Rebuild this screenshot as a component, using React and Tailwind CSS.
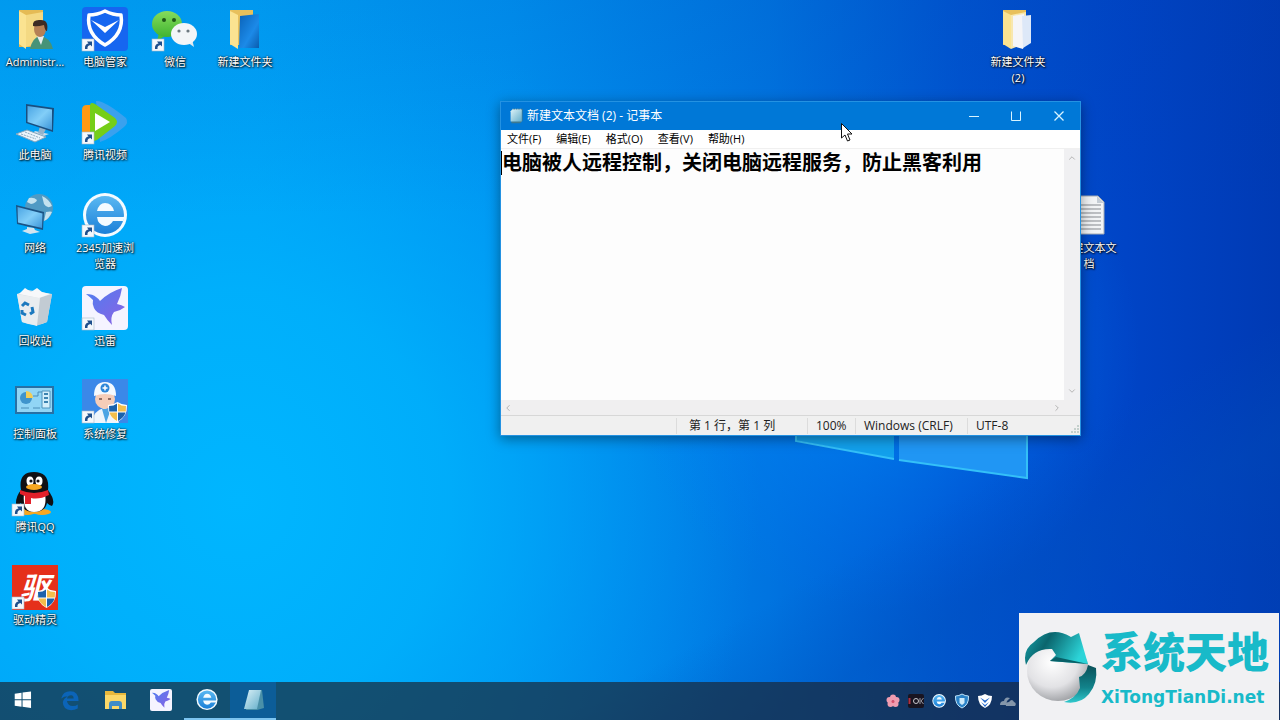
import React, { useState } from 'react';
import { ChevronUp, ChevronDown, ChevronLeft, ChevronRight } from 'lucide-react';

const Wallpaper = () => (
  <svg className="absolute inset-0 h-full w-full" viewBox="0 0 1280 720" preserveAspectRatio="none" aria-hidden="true">
    <defs>
      <linearGradient id="sky" x1="0" y1="0" x2="1" y2="0">
        <stop offset="0" stopColor="#00a6f8" />
        <stop offset="0.2" stopColor="#00a4f8" />
        <stop offset="0.4" stopColor="#0092f0" />
        <stop offset="0.6" stopColor="#0074e0" />
        <stop offset="0.75" stopColor="#0054d0" />
        <stop offset="0.88" stopColor="#0044c6" />
        <stop offset="1" stopColor="#003ab4" />
      </linearGradient>
      <radialGradient id="glow" gradientUnits="userSpaceOnUse" cx="240" cy="500" r="520">
        <stop offset="0" stopColor="#00b6ff" stopOpacity="1" />
        <stop offset="0.4" stopColor="#00b2fc" stopOpacity="0.8" />
        <stop offset="1" stopColor="#00a0f8" stopOpacity="0" />
      </radialGradient>
      <radialGradient id="halo" gradientUnits="userSpaceOnUse" cx="880" cy="350" r="260">
        <stop offset="0" stopColor="#0098ff" stopOpacity="0.6" />
        <stop offset="1" stopColor="#0078ff" stopOpacity="0" />
      </radialGradient>
      <linearGradient id="shade" x1="0" y1="0" x2="0" y2="1">
        <stop offset="0" stopColor="#0040a8" stopOpacity="0.12" />
        <stop offset="0.3" stopColor="#0040a8" stopOpacity="0" />
      </linearGradient>
      <linearGradient id="beam" gradientUnits="userSpaceOnUse" x1="880" y1="540" x2="980" y2="720">
        <stop offset="0" stopColor="#0050b8" stopOpacity="0" />
        <stop offset="0.5" stopColor="#0050b8" stopOpacity="0.35" />
        <stop offset="1" stopColor="#0050b8" stopOpacity="0.2" />
      </linearGradient>
    </defs>
    <rect width="1280" height="720" fill="url(#sky)" />
    <rect width="1280" height="720" fill="url(#glow)" />
    <rect width="1280" height="720" fill="url(#halo)" />
    <rect width="1280" height="720" fill="url(#shade)" />
    <rect width="1280" height="720" fill="url(#beam)" />
    <path d="M796 420 V440 L894 459 V420Z" fill="#12a0ec" />
    <path d="M899 420 V460 L1027 478 V420Z" fill="#2096f4" />
    <path d="M796 420 V441 L894 459 M899 460 L1027 478 V420" fill="none" stroke="#34c0f8" strokeWidth="2" />
  </svg>
);

const Shield = ({ x, y }) => (
  <g transform={`translate(${x} ${y})`}>
    <path d="M9.5 0 Q14 3 19 3 Q19.500 15 9.500 20 Q-0.500 15 0 3 Q5 3 9.500 0Z" fill="#fff" />
    <path d="M9 1.500 V9.500 H1.200 L1 4 Q6 4 9 1.500Z M10 10.500 H17.500 Q16 16 10 19Z" fill="#1b62ac" />
    <path d="M10 1.500 V9.500 H17.800 L18 4 Q13 4 10 1.500Z M9 10.500 H1.500 Q3 16 9 19Z" fill="#f4bf4c" />
  </g>
);

const ShortcutArrow = () => (
  <g>
    <rect x="0" y="32" width="12" height="12" fill="#f4f8fc" stroke="#a8b8c8" strokeWidth="0.6" />
    <path d="M3 42 Q2.500 37 6.500 36.500 L5 34.500 H10 V39.500 L8.500 38 Q5 38.500 5.500 42Z" fill="#1f4f8c" />
  </g>
);

const Folder = () => (
  <g>
    <path d="M8 3 H31 V38 H8Z" fill="#e8c05c" />
    <path d="M8 4 L16 8 V42 L8 37Z" fill="#fbe391" />
  </g>
);

const Bird = () => (
  <path d="M4 8 Q11 8 14 11 Q17 13 18 15 Q27 6 40 2 Q39 10 35 18 Q40 19 43 21 Q38 25 32 26 Q28 31 30 39 Q25 34 22 29 Q14 27 12 22 Q10 18 11 14 Q8 11 4 8Z" fill="url(#birdFill)" />
);

const BrowserE = () => (
  <g>
    <circle cx="23" cy="22" r="22" fill="#f4fbff" />
    <circle cx="23" cy="22" r="19" fill="url(#browserFill)" />
    <path d="M15 18 Q17 10 23 10 Q30 10 32 18Z" fill="#f4fbff" />
    <path d="M15 24 H43 L41 28 H31 Q28 33 23 33 Q16 32 15 24Z" fill="#f4fbff" />
  </g>
);

const PcShield = () => (
  <g>
    <path d="M23 4 Q31 8 39 8 Q42 27 23 38 Q4 27 7 8 Q15 8 23 4Z" fill="none" stroke="#fff" strokeWidth="3.500" strokeLinejoin="round" />
    <path d="M9 13 L23 26 L37 13 L23 20Z" fill="#fff" />
  </g>
);

const pictures = {
  user: (
    <g>
      <path d="M7 3 H31 V40 H7Z" fill="#e5bb55" />
      <path d="M7 4 L14 8 V42 L7 37Z" fill="#fbe391" />
      <path d="M14 8 L31 5 V35 L14 40Z" fill="#f4d983" />
      <path d="M18 42 Q20 31 28 29 Q38 30 41 42Z" fill="#469378" />
      <path d="M25 29 L29 38 L32 29Z" fill="#e8eef0" />
      <ellipse cx="28" cy="22" rx="6" ry="8" fill="#b58056" />
      <path d="M21 19 Q20 12 29 13 Q37 13 35 24 Q33 24 32 18 Q25 20 21 19Z" fill="#3c2b24" />
    </g>
  ),
  manager: (
    <g>
      <rect width="46" height="44" rx="4" fill="#1666f0" />
      <PcShield />
    </g>
  ),
  wechat: (
    <g>
      <path d="M7 26 L5 34 L13 29Z" fill="#49bd38" />
      <ellipse cx="15" cy="17" rx="15" ry="13" fill="url(#wechatFill)" />
      <circle cx="12" cy="13" r="2" fill="#1e5818" />
      <circle cx="22" cy="13" r="2" fill="#1e5818" />
      <path d="M35 35 L42 40 L40 32Z" fill="#e0e8ee" />
      <ellipse cx="32" cy="27" rx="13" ry="11" fill="#f2f5f8" />
      <circle cx="27" cy="24" r="1.600" fill="#6c7880" />
      <circle cx="36" cy="24" r="1.600" fill="#6c7880" />
    </g>
  ),
  folder: (
    <g>
      <Folder />
      <path d="M18 9 L37 7 V41 H17Z" fill="url(#folderInside)" />
    </g>
  ),
  papers: (
    <g>
      <Folder />
      <path d="M16 8 L31 5 V36 L16 42Z" fill="#f8e7ae" />
      <path d="M18 9 L29 7 V38 L28 42 L18 39Z" fill="#f5f5f8" />
      <path d="M27 9 L36 8 V36 L28 41Z" fill="#dde8f8" />
    </g>
  ),
  computer: (
    <g>
      <path d="M23 31 L37 34 L29 37 L20 34Z" fill="#cadbe8" />
      <path d="M28 26 L34 29 L31 35 L26 33Z" fill="#94b3cb" />
      <path d="M14 4 L42 8 L41 32 L14 23Z" fill="#194f80" />
      <path d="M15.500 6 L40 9.500 V30 L15.500 22Z" fill="url(#screenFill)" />
      <path d="M4 34 L15 30 L34 37 L23 42Z" fill="#eaf4fb" stroke="#83a5bd" />
      <path d="M9 34 L24 39 M13 32 L28 38" stroke="#8eabc0" strokeDasharray="2 1" />
    </g>
  ),
  video: (
    <g>
      <path d="M14 1 Q22 0 44 18 Q47 23 42 27 Q28 39 18 42Z" fill="#3aa1ee" />
      <path d="M0 10 Q0 5 5 5 H10 V38 H0Z" fill="#ff9914" />
      <path d="M8 6 Q8 1 13 4 L33 18 Q37 22 33 26 L15 40 Q8 43 8 38Z" fill="#75ce18" />
      <path d="M13 13 L28 22 L13 31Z" fill="#fff" />
    </g>
  ),
  network: (
    <g>
      <circle cx="27" cy="15" r="14" fill="#4f9ac4" />
      <path d="M17 5 Q22 4 25 7 Q24 10 19 11 L15 9Z M30 3 Q37 6 40 13 Q35 16 32 11Z M34 19 Q39 18 40 19 Q37 26 32 28Z" fill="#c3e2ef" />
      <path d="M4 12 L32 19 L31 37 L5 31Z" fill="#1b5384" />
      <path d="M5.500 14 L30.500 20.500 L30 35 L6 29.500Z" fill="url(#screenFill)" />
      <path d="M15 34 L22 35 L23 37 L28 39 L18 41 L10 38 L15 36Z" fill="#d2e4ef" />
    </g>
  ),
  browser: <BrowserE />,
  bin: (
    <g>
      <path d="M5 8 L16 4 L40 8 L35 36 Q24 42 10 36Z" fill="#d9e0e5" />
      <path d="M5 8 L27 12 L40 8 L35 36 L24 40Z" fill="#c2cbd3" />
      <path d="M5 8 L28 12 L25 40 L10 36Z" fill="#e9edf0" />
      <path d="M7 8 L13 2 L19 6 L25 2 L30 6 L38 8 L27 12Z" fill="#f7f8fa" />
      <path d="M10 20 L13 17 L17 19 M20 21 L21 26 L18 28 M14 29 L10 27 L10 24" fill="none" stroke="#1c79be" strokeWidth="3" />
    </g>
  ),
  thunder: (
    <g>
      <rect width="46" height="44" rx="4" fill="#f5f4ff" />
      <Bird />
    </g>
  ),
  panel: (
    <g>
      <rect x="3" y="7" width="39" height="28" fill="#2870a4" />
      <rect x="5" y="9" width="35" height="24" fill="#91d5f5" />
      <circle cx="14" cy="19" r="6" fill="#3f94cc" />
      <path d="M14 19 V12 A7 7 0 0 1 21 19Z" fill="#f3cd55" />
      <path d="M21 17 H26 V13 H30 M21 29 H28 M9 29 H17" fill="none" stroke="#4a8eb8" />
      <path d="M30 12 H38 V29 H30Z" fill="#d3effb" stroke="#4e94bd" />
      <path d="M32 15 H36 M32 19 H36 M32 23 H36" stroke="#3c83b0" strokeWidth="2" />
    </g>
  ),
  repair: (
    <g>
      <rect width="46" height="44" fill="#3b88e8" />
      <path d="M9 44 Q12 31 22 29 Q34 31 37 44Z" fill="#eef5fc" />
      <path d="M20 30 L24 44 L29 30Z" fill="#4ca4e4" />
      <ellipse cx="23" cy="20" rx="10" ry="10" fill="#f6cdb8" />
      <path d="M12 17 Q12 3 23 3 Q34 3 34 17 Q23 13 12 17Z" fill="#f5faff" />
      <circle cx="23" cy="9" r="4.500" fill="#2e87d8" />
      <path d="M23 6.500 V11.500 M20.500 9 H25.500" stroke="#fff" strokeWidth="1.500" />
      <path d="M17 20 H20 M26 20 H29" stroke="#745048" strokeWidth="1.500" />
      <Shield x={26} y={23} />
    </g>
  ),
  qq: (
    <g>
      <ellipse cx="15" cy="40" rx="9" ry="3" fill="#f7a822" />
      <ellipse cx="30" cy="40" rx="9" ry="3" fill="#f7a822" />
      <path d="M9 18 Q6 0 22 0 Q38 0 36 18 Q44 29 40 34 Q38 34 35 31 Q33 40 22 40 Q11 40 9 31 Q4 35 4 31 Q4 24 9 18Z" fill="#101014" />
      <path d="M12 22 H33 Q36 40 22 40 Q10 40 12 22Z" fill="#fff" />
      <ellipse cx="18" cy="9" rx="3.500" ry="4.500" fill="#fff" />
      <ellipse cx="27" cy="9" rx="3.500" ry="4.500" fill="#fff" />
      <circle cx="19" cy="9" r="1.600" fill="#101014" />
      <circle cx="26" cy="9" r="1.600" fill="#101014" />
      <ellipse cx="22" cy="15" rx="8" ry="3" fill="#f7a822" />
      <path d="M8 18 Q22 24 36 18 L37 23 Q27 28 19 26 V32 H13 V24 L8 22Z" fill="#e2202a" />
    </g>
  ),
  driver: (
    <g>
      <rect width="46" height="45" fill="#e5301a" />
      <text x="8" y="34" fontSize="30" fontWeight="700" fontStyle="italic" fill="#fff">驱</text>
      <Shield x={25} y={23} />
    </g>
  ),
  document: (
    <g>
      <path d="M8 3 H32 L38 9 V41 H8Z" fill="#f2f4f6" stroke="#a6acb2" />
      <path d="M31 3 V10 H38Z" fill="#c4ccd4" />
      <path d="M11 12 H35 M11 16 H35 M11 20 H35 M11 24 H35 M11 28 H35 M11 32 H35 M11 36 H35" stroke="#85898f" />
    </g>
  ),
};

// Gradients shared by the desktop and taskbar drawings
const SharedDefs = () => (
  <svg className="absolute h-0 w-0" aria-hidden="true">
    <defs>
      <linearGradient id="birdFill" x1="0" y1="0" x2="1" y2="1">
        <stop offset="0" stopColor="#4e7ef0" />
        <stop offset="1" stopColor="#8b62e4" />
      </linearGradient>
      <linearGradient id="browserFill" x1="0" y1="0" x2="0" y2="1">
        <stop offset="0" stopColor="#5ab8f2" />
        <stop offset="1" stopColor="#1b80d8" />
      </linearGradient>
      <linearGradient id="wechatFill" x1="0" y1="0" x2="0" y2="1">
        <stop offset="0" stopColor="#86dc5c" />
        <stop offset="1" stopColor="#40b431" />
      </linearGradient>
      <linearGradient id="folderInside" x1="0" y1="0" x2="1" y2="1">
        <stop offset="0" stopColor="#0a62b8" />
        <stop offset="0.6" stopColor="#1c8ae8" />
        <stop offset="1" stopColor="#0a5cae" />
      </linearGradient>
      <linearGradient id="screenFill" x1="0" y1="0" x2="1" y2="1">
        <stop offset="0" stopColor="#4aa5e4" />
        <stop offset="0.5" stopColor="#82cef8" />
        <stop offset="1" stopColor="#3a94d8" />
      </linearGradient>
      <linearGradient id="noteFill" x1="0" y1="0" x2="1" y2="1">
        <stop offset="0" stopColor="#dcf2f8" />
        <stop offset="1" stopColor="#64aeca" />
      </linearGradient>
    </defs>
  </svg>
);

const columns = [
  [
    { label: 'Administr...', picture: 'user' },
    { label: '此电脑', picture: 'computer' },
    { label: '网络', picture: 'network' },
    { label: '回收站', picture: 'bin' },
    { label: '控制面板', picture: 'panel' },
    { label: '腾讯QQ', picture: 'qq', shortcut: true },
    { label: '驱动精灵', picture: 'driver', shortcut: true },
  ],
  [
    { label: '电脑管家', picture: 'manager', shortcut: true },
    { label: '腾讯视频', picture: 'video', shortcut: true },
    { label: '2345加速浏览器', picture: 'browser', shortcut: true },
    { label: '迅雷', picture: 'thunder', shortcut: true },
    { label: '系统修复', picture: 'repair', shortcut: true },
  ],
  [{ label: '微信', picture: 'wechat', shortcut: true }],
  [{ label: '新建文件夹', picture: 'folder' }],
];

const DesktopIcon = ({ label, picture, shortcut }) => (
  <button type="button" className="flex h-[93px] w-[70px] flex-col items-center pt-[7px]">
    <svg viewBox="0 0 46 46" className="h-[46px] w-[46px] shrink-0 overflow-visible" aria-hidden="true">
      {pictures[picture]}
      {shortcut && <ShortcutArrow />}
    </svg>
    <span className="mt-px w-16 text-center text-[11px] leading-4 text-white [text-shadow:1px_1px_2px_#000,0_0_2px_#000]">
      {label}
    </span>
  </button>
);

const menus = ['文件(F)', '编辑(E)', '格式(O)', '查看(V)', '帮助(H)'];

const NotepadIcon = ({ className }) => (
  <svg viewBox="0 0 20 20" className={className} aria-hidden="true">
    <path d="M5 1 H17 V16 L14 19 H3 V3Z" fill="#3c7890" />
    <path d="M4 2 H16 V17 H2 V4Z" fill="url(#noteFill)" />
    <path d="M5 2 V1 M8 2 V1 M11 2 V1 M14 2 V1" stroke="#eef8fc" />
  </svg>
);

const Notepad = () => {
  const [text, setText] = useState('电脑被人远程控制，关闭电脑远程服务，防止黑客利用');

  return (
    <section className="absolute left-[500px] top-[101px] flex h-[335px] w-[581px] flex-col border border-[#2492e2] bg-white shadow-[0_3px_12px_rgba(0,0,0,0.4)]">
      <header className="flex h-7 shrink-0 items-center bg-[#0078d7] pl-2 text-white">
        <NotepadIcon className="h-4 w-4" />
        <h1 className="ml-[2px] text-xs">新建文本文档 (2) - 记事本</h1>
        <div className="ml-auto flex h-full">
          <button type="button" aria-label="最小化" className="grid w-[42px] place-items-center">
            <svg viewBox="0 0 10 10" className="h-[10px] w-[10px]"><path d="M0 5.500 H10" stroke="#d8f4ff" /></svg>
          </button>
          <button type="button" aria-label="最大化" className="grid w-[42px] place-items-center">
            <svg viewBox="0 0 10 10" className="h-[10px] w-[10px]"><path d="M0.500 0.500 V9.500 H9.500 V0.500" fill="none" stroke="#d8f4ff" /></svg>
          </button>
          <button type="button" aria-label="关闭" className="grid w-[43px] place-items-center">
            <svg viewBox="0 0 10 10" className="h-[10px] w-[10px]"><path d="M0.500 0.500 L9.500 9.500 M9.500 0.500 L0.500 9.500" stroke="#d8f4ff" strokeWidth="1.300" /></svg>
          </button>
        </div>
      </header>
      <nav className="flex h-[19px] shrink-0 items-center gap-[15px] border-b border-[#f0f0f0] bg-white px-[6px] text-[11px] text-black">
        {menus.map((menu) => (
          <button key={menu} type="button">{menu}</button>
        ))}
      </nav>
      <div className="flex min-h-0 flex-1">
        <div className="flex flex-1 bg-[#fdfdfd] pt-[2px]">
          <span className="h-6 w-px bg-black" />
          <textarea
            aria-label="文本编辑器"
            value={text}
            onChange={(e) => setText(e.target.value)}
            spellCheck={false}
            className="h-full flex-1 resize-none overflow-hidden bg-transparent text-xl leading-6 font-bold text-black outline-none"
          />
        </div>
        <div className="flex w-4 flex-col items-center justify-between bg-[#f0f0f2] py-1 text-[#a8a8a8]">
          <ChevronUp size={10} />
          <ChevronDown size={10} />
        </div>
      </div>
      <div className="flex h-[15px] shrink-0 items-center justify-between bg-[#f0eff0] pr-[18px] pl-[2px] text-[#a8a8a8]">
        <ChevronLeft size={10} />
        <ChevronRight size={10} />
      </div>
      <footer className="flex h-5 shrink-0 items-center justify-end border-t border-[#d7d7d7] bg-[#f0f0f0] text-xs leading-4 text-[#222]">
        <span className="w-[131px] border-l border-[#dcdcdc] pl-3">第 1 行，第 1 列</span>
        <span className="w-12 border-l border-[#dcdcdc] pl-2">100%</span>
        <span className="w-[112px] border-l border-[#dcdcdc] pl-2">Windows (CRLF)</span>
        <span className="flex w-[113px] items-end justify-between border-l border-[#dcdcdc] pl-2">
          UTF-8
          <svg viewBox="0 0 10 10" className="h-[10px] w-[10px]" aria-hidden="true">
            <path d="M7 1h2v2h-2z M7 4h2v2h-2z M4 4h2v2h-2z M7 7h2v2h-2z M4 7h2v2h-2z M1 7h2v2h-2z" fill="#c4d0cc" />
          </svg>
        </span>
      </footer>
    </section>
  );
};

const taskbarApps = [
  {
    name: '开始',
    art: <path d="M4 7 L14 5.500 V15 H4Z M15.500 5.300 L28 3.500 V15 H15.500Z M4 16.500 H14 V26 L4 24.500Z M15.500 16.500 H28 V28 L15.500 26.200Z" fill="#fff" transform="translate(5 5) scale(0.68)" />,
  },
  {
    name: 'Edge',
    art: <path d="M5 14 Q7 5 16 5 Q26 5 26 17 H12 Q13 23 19 23 Q23 23 25 21 V26 Q21 28 17 28 Q7 27 7 18 Q8 13 14 11 Q8 11 5 14Z M12 14 H20 Q20 10 17 10 Q13 10 12 14Z" fill="#0b64b8" fillRule="evenodd" transform="translate(4 3) scale(0.83)" />,
  },
  {
    name: '文件资源管理器',
    art: (
      <g>
        <path d="M6 7 H14 L16 9 H27 V25 H6Z" fill="#e8b83c" />
        <path d="M6 11 H27 V25 H6Z" fill="#fbd868" />
        <path d="M10 25 V20 Q10 17 13 17 H20 Q23 17 23 20 V25 H20 V22 H13 V25Z" fill="#3f8cc8" />
      </g>
    ),
  },
  {
    name: '迅雷',
    art: (
      <g>
        <rect x="5" y="5" width="22" height="22" rx="2" fill="#f5f4ff" />
        <g transform="translate(5 5) scale(0.48)"><Bird /></g>
      </g>
    ),
  },
  { name: '2345加速浏览器', open: true, art: <g transform="translate(5 5) scale(0.48)"><BrowserE /></g> },
  {
    name: '记事本',
    open: true,
    active: true,
    art: (
      <g>
        <path d="M13 6 H25 L27 24 L20 26 H9Z" fill="#4a90a8" />
        <path d="M12 6 H24 L20 25 H7Z" fill="url(#noteFill)" />
      </g>
    ),
  },
];

const trayIcons = [
  {
    name: '花',
    art: (
      <g fill="#f09cb0">
        <circle cx="8" cy="4.500" r="3" />
        <circle cx="4.500" cy="7" r="3" />
        <circle cx="11.500" cy="7" r="3" />
        <circle cx="5.500" cy="11" r="3" />
        <circle cx="10.500" cy="11" r="3" />
        <circle cx="8" cy="8.500" r="1.500" fill="#d8506c" />
      </g>
    ),
  },
  {
    name: '录屏',
    art: (
      <g>
        <rect x="0" y="1" width="16" height="14" rx="2" fill="#181420" />
        <path d="M1.500 5 V11" stroke="#b03040" strokeWidth="2" />
        <circle cx="8" cy="8" r="2.500" fill="none" stroke="#c8c8cc" />
        <path d="M12 5 V11 M15.500 5 L13 8 L15.500 11" fill="none" stroke="#9c9ca4" />
      </g>
    ),
  },
  { name: '浏览器', art: <g transform="translate(1 1) scale(0.31)"><BrowserE /></g> },
  {
    name: '安全防护',
    art: (
      <g>
        <path d="M8 1 Q11 3 14.500 3 Q15 12 8 15 Q1 12 1.500 3 Q5 3 8 1Z" fill="#2a82c8" stroke="#bfe4fa" />
        <path d="M5.500 5 H10.500 V10 L8 12 L5.500 10Z" fill="#cdeafa" />
      </g>
    ),
  },
  {
    name: '电脑管家',
    art: (
      <g>
        <path d="M8 1 Q11 3 15 3 Q15 12 8 15 Q1 12 1 3 Q5 3 8 1Z" fill="#fff" />
        <path d="M3 4.500 L8 7.500 L13 4.500 L8 10Z M4 9 L8 12 L12 9 L8 14Z" fill="#2469cc" />
      </g>
    ),
  },
  { name: 'OneDrive', art: <path d="M0 12 Q0 8 4 8 Q5 3 10 5 L7 8 L6 12Z M6 13 Q5 9 9 9 Q12 5 14 9 Q17 10 15 13Z" fill="#8496aa" /> },
];

const Taskbar = () => (
  <footer className="relative flex h-[38px] shrink-0 bg-[#1a2837]/70">
    {taskbarApps.map(({ name, art, open, active }) => (
      <button
        key={name}
        type="button"
        aria-label={name}
        className={`flex w-[46px] justify-center border-b-2 pt-[2px] ${open ? 'border-[#7cc4f0]' : 'border-transparent'} ${active ? 'bg-[#0a62a8]/70' : ''}`}
      >
        <svg viewBox="0 0 32 32" className="h-8 w-8" aria-hidden="true">{art}</svg>
      </button>
    ))}
    <div className="ml-auto flex items-center gap-[7px] pr-[264px]">
      {trayIcons.map(({ name, art }) => (
        <button key={name} type="button" aria-label={name}>
          <svg viewBox="0 0 16 16" className="h-4 w-4" aria-hidden="true">{art}</svg>
        </button>
      ))}
    </div>
  </footer>
);

const SiteBadge = () => (
  <aside className="absolute right-px bottom-0 flex h-[107px] w-[260px] items-center bg-[#f1f1f3] pl-[5px] text-[#18bac9]">
    <svg viewBox="0 0 74 78" className="h-[78px] w-[74px] shrink-0" aria-hidden="true">
      <defs>
        <radialGradient id="ball" cx="0.4" cy="0.35" r="0.7">
          <stop offset="0" stopColor="#ffffff" />
          <stop offset="0.6" stopColor="#e2e2e5" />
          <stop offset="1" stopColor="#9a9ca0" />
        </radialGradient>
        <linearGradient id="teal" x1="0" y1="0" x2="1" y2="0.3">
          <stop offset="0" stopColor="#18a4ac" />
          <stop offset="0.4" stopColor="#0a656d" />
          <stop offset="1" stopColor="#2cd4d8" />
        </linearGradient>
        <linearGradient id="tealDark" x1="0" y1="0" x2="0" y2="1">
          <stop offset="0" stopColor="#0a5058" />
          <stop offset="0.6" stopColor="#12838b" />
          <stop offset="1" stopColor="#30c8cc" />
        </linearGradient>
      </defs>
      <ellipse cx="34" cy="43" rx="31" ry="30" fill="url(#ball)" />
      <path d="M2 37 Q-2 22 10 14 Q27 -3 47 9 L55 5 L64 36 L26 33 L32 27 L28 21 Q9 20 2 37Z" fill="url(#teal)" />
      <path d="M26 33 L32 29 L64 36Z" fill="#086068" />
      <path d="M64 37 L72 40 Q74 55 65 66 Q56 77 40 74 Q52 70 56 60 L55 49 Q62 47 64 37Z" fill="url(#tealDark)" />
    </svg>
    <div className="ml-[3px] flex flex-col pt-[6px] whitespace-nowrap">
      <strong className="text-[42px] leading-[50px] font-black">系统天地</strong>
      <a href="#site" className="mt-1 font-['DejaVu_Sans',sans-serif] text-[17px] leading-8 font-bold">XiTongTianDi.net</a>
    </div>
  </aside>
);

const App = () => (
  <div className="relative flex min-h-screen flex-col overflow-hidden font-['Open_Sans','Noto_Sans_CJK_SC',sans-serif]">
    <SharedDefs />
    <Wallpaper />
    <main className="relative flex flex-1">
      {columns.map((items) => (
        <div key={items[0].label} className="flex flex-col">
          {items.map((item) => (
            <DesktopIcon key={item.label} {...item} />
          ))}
        </div>
      ))}
      <div className="absolute left-[983px] top-0">
        <DesktopIcon label="新建文件夹 (2)" picture="papers" />
      </div>
      <div className="absolute left-[1054px] top-[186px]">
        <DesktopIcon label="新建文本文档" picture="document" />
      </div>
      <Notepad />
      <svg viewBox="0 0 12 19" className="absolute left-[841px] top-[123px] h-[19px] w-3" aria-hidden="true">
        <path d="M0.500 0.500 V15 L4 12 L6.500 18 L9 17 L6.500 11 H11Z" fill="#fff" stroke="#111" />
      </svg>
    </main>
    <Taskbar />
    <SiteBadge />
  </div>
);

export default App;
